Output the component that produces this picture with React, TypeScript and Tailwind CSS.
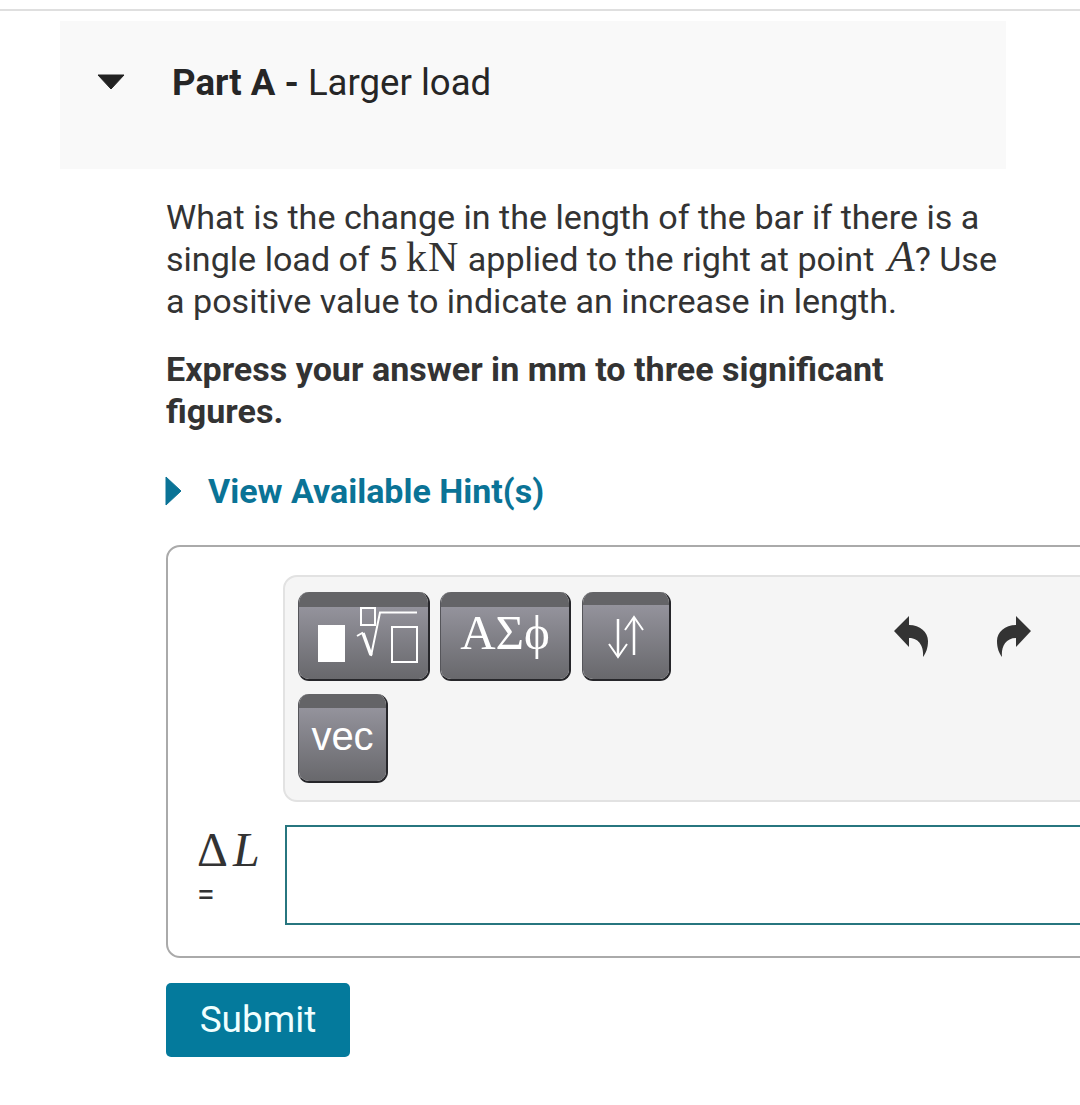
const roboto = { fontFamily: 'Roboto, "Liberation Sans", sans-serif' };
const serif = { fontFamily: '"Liberation Serif", serif' };

function ToolButton({ width, band, children }: { width: string; band: string; children: React.ReactNode }) {
  return (
    <div className={`${width} h-[89px] flex flex-col overflow-hidden rounded-[11px] border-r-2 border-b-2 border-l border-[#26262a] border-l-[#55555a]`}>
      <div className={`${band} shrink-0 bg-[#646467]`}></div>
      <div className="flex-1 flex items-start justify-center bg-gradient-to-b from-[#94939c] to-[#68686c] text-white">
        {children}
      </div>
    </div>
  );
}

function UndoIcon({ flip }: { flip?: boolean }) {
  return (
    <svg viewBox="0 0 36 43" className={`w-[36px] h-[43px] ${flip ? '-scale-x-100' : ''}`}>
      <path d="M1 16 L16 1 L16 10 C27 10 35 17 35 26 C35 33 33 38 30 42 C31 33 27 23 16 23 L16 32 Z" fill="#333333" />
    </svg>
  );
}

export default function App() {
  return (
    <div className="w-[1080px] h-[1105px] overflow-hidden bg-white text-[#333333] pt-[9px]" style={roboto}>
      <div className="h-[2px] bg-[#dfdfdf]"></div>

      {/* Part header */}
      <div className="ml-[60px] mt-[10px] w-[946px] h-[148px] bg-[#f9f9f9] flex items-start pt-[41px] pl-[37px]">
        <svg viewBox="0 0 28 16" className="w-[28px] h-[16px] mt-[12px]">
          <path d="M1 1 H27 L14 15 Z" fill="#222222" strokeLinejoin="round" stroke="#222222" strokeWidth="1" />
        </svg>
        <h2 className="ml-[47px] text-[36.6px] leading-[42px] text-[#262626]">
          <span className="font-bold">Part A - </span>Larger load
        </h2>
      </div>

      <div className="pl-[166px] pt-[27px]">
        <p className="w-[850px] text-[34.1px] leading-[42px]">
          What is the change in the length of the bar if there is a single load of 5{' '}
          <span className="text-[42px] leading-[0] tracking-[1px]" style={serif}>kN</span> applied to the right at point{' '}
          <span className="ml-[5px] italic text-[44px] leading-[0]" style={serif}>A</span>? Use a positive value to indicate an increase in length.
        </p>

        <p className="w-[780px] mt-[26px] text-[34.1px] leading-[42px] font-bold">
          Express your answer in mm to three significant figures.
        </p>

        <div className="mt-[38px] flex items-center h-[42px]">
          <svg viewBox="0 0 18 30" className="-ml-[1px] w-[18px] h-[30px]">
            <path d="M1 1 L16 15 L1 29 Z" fill="#0a7396" stroke="#0a7396" strokeLinejoin="round" strokeWidth="1" />
          </svg>
          <span className="ml-[25px] text-[34px] font-bold text-[#0a7396]">View Available Hint(s)</span>
        </div>

        {/* Answer box runs off the right edge of the page */}
        <div className="mt-[33px] w-[1100px] h-[413px] rounded-[14px] border-2 border-[#aaaaaa] pl-[115px] pt-[28px]">
          <div className="h-[227px] rounded-[14px] border-2 border-[#e2e2e2] bg-[#f5f5f5] pl-[13px] pt-[15px] relative">
            <div className="flex gap-[10px]">
              <ToolButton width="w-[132px]" band="h-[15px]">
                <svg viewBox="0 0 129 72" className="w-[129px] h-[72px]">
                  <rect x="19" y="18" width="27" height="37" fill="#ffffff" />
                  <rect x="62" y="1" width="14" height="17" fill="none" stroke="#ffffff" strokeWidth="2" />
                  <path d="M58 29 L64 25.5" fill="none" stroke="#ffffff" strokeWidth="2" />
                  <path d="M64 26 L72 48" fill="none" stroke="#ffffff" strokeWidth="3.5" />
                  <path d="M72 49 L81 5.5 H118" fill="none" stroke="#ffffff" strokeWidth="2" />
                  <rect x="93" y="20" width="25" height="35" fill="none" stroke="#ffffff" strokeWidth="2" />
                </svg>
              </ToolButton>
              <ToolButton width="w-[131px]" band="h-[15px]">
                <span className="text-[49px] leading-[52px] whitespace-nowrap" style={serif}>ΑΣϕ</span>
              </ToolButton>
              <div className="ml-[1px]">
                <ToolButton width="w-[89px]" band="h-[13px]">
                  <svg viewBox="0 0 40 50" className="w-[40px] h-[50px] mt-[9px]">
                    <path d="M12 5 V42" fill="none" stroke="#ffffff" strokeWidth="2.5" />
                    <path d="M3 30 L12 43 L21 30" fill="none" stroke="#ffffff" strokeWidth="2" />
                    <path d="M28 41 V4" fill="none" stroke="#ffffff" strokeWidth="2.5" />
                    <path d="M19 16 L28 3 L37 16" fill="none" stroke="#ffffff" strokeWidth="2" />
                  </svg>
                </ToolButton>
              </div>
            </div>
            <div className="mt-[13px]">
              <ToolButton width="w-[90px]" band="h-[14px]">
                <span className="text-[40px] leading-[56px]" style={{ fontFamily: '"Liberation Sans", sans-serif' }}>vec</span>
              </ToolButton>
            </div>
            <div className="absolute left-[608px] top-[38px] flex gap-[67px]">
              <UndoIcon />
              <UndoIcon flip />
            </div>
          </div>

          <div className="mt-[23px] flex">
            <div className="-ml-[86px] w-[86px] pt-[2px]">
              <div className="text-[48px] leading-[46px] whitespace-nowrap tracking-[5px]" style={serif}>
                Δ<span className="italic">L</span>
              </div>
              <div className="text-[32px] leading-[30px] mt-[6px]">=</div>
            </div>
            <div className="ml-[2px] flex-1 h-[100px] border-2 border-[#27767f] bg-white"></div>
          </div>
        </div>

        <button className="mt-[25px] w-[184px] h-[74px] rounded-[5px] bg-[#047a9c] text-[#f0ffff] text-[37px]">Submit</button>
      </div>
    </div>
  );
}
